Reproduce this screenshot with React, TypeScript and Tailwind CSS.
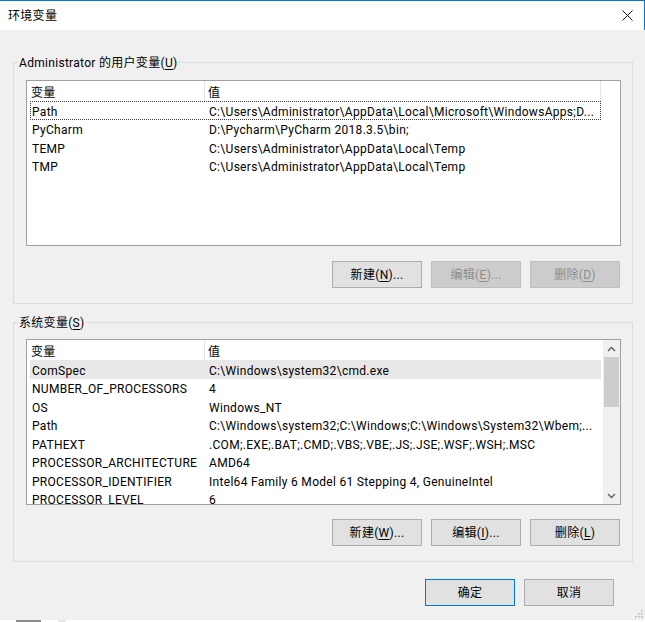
import type React from "react";

const userVars: [string, string][] = [
  ["Path", "C:\\Users\\Administrator\\AppData\\Local\\Microsoft\\WindowsApps;D..."],
  ["PyCharm", "D:\\Pycharm\\PyCharm 2018.3.5\\bin;"],
  ["TEMP", "C:\\Users\\Administrator\\AppData\\Local\\Temp"],
  ["TMP", "C:\\Users\\Administrator\\AppData\\Local\\Temp"],
];

const sysVars: [string, string][] = [
  ["ComSpec", "C:\\Windows\\system32\\cmd.exe"],
  ["NUMBER_OF_PROCESSORS", "4"],
  ["OS", "Windows_NT"],
  ["Path", "C:\\Windows\\system32;C:\\Windows;C:\\Windows\\System32\\Wbem;..."],
  ["PATHEXT", ".COM;.EXE;.BAT;.CMD;.VBS;.VBE;.JS;.JSE;.WSF;.WSH;.MSC"],
  ["PROCESSOR_ARCHITECTURE", "AMD64"],
  ["PROCESSOR_IDENTIFIER", "Intel64 Family 6 Model 61 Stepping 4, GenuineIntel"],
  ["PROCESSOR_LEVEL", "6"],
];

function Key({ children }: { children: React.ReactNode }) {
  return <span className="underline underline-offset-[2px]">{children}</span>;
}

function Btn({
  children,
  disabled,
  primary,
}: {
  children: React.ReactNode;
  disabled?: boolean;
  primary?: boolean;
}) {
  return (
    <button
      type="button"
      className={
        "flex h-[27px] w-[90px] items-center justify-center border pt-[1px] text-[12px] tracking-[0.3px] " +
        (disabled
          ? "border-[#bfbfbf] bg-[#cccccc] text-[#8c8c8c]"
          : primary
            ? "border-[#0078d7] bg-[#e1e1e1] text-black"
            : "border-[#adadad] bg-[#e1e1e1] text-black")
      }
    >
      {children}
    </button>
  );
}

function Chevron({ down }: { down?: boolean }) {
  return (
    <svg width="9" height="6" viewBox="0 0 9 6" className={down ? "rotate-180" : ""}>
      <polyline points="1,5 4.5,1.5 8,5" fill="none" stroke="#606060" strokeWidth="1.4" />
    </svg>
  );
}

function VarList({ rows, focused, selected, scroll }: { rows: [string, string][]; focused?: number; selected?: number; scroll?: boolean }) {
  return (
    <div className="flex h-[166px] overflow-hidden border border-[#a0a0a0] bg-white">
      <div className="flex min-w-0 flex-1 flex-col">
        <div className="flex h-[20px] shrink-0 items-center">
          <div className="flex h-full w-[178px] items-center border-r border-[#e5e5e5] pl-[4px] pt-[3px]">变量</div>
          <div className={"flex h-full w-[396px] items-center pl-[3px] pt-[3px] " + (scroll ? "" : "border-r border-[#e5e5e5]")}>值</div>
        </div>
        {rows.map(([name, value], i) => (
          <div
            key={name + i}
            className={
              "ml-[3px] flex h-[18.5px] w-[571px] shrink-0 items-center whitespace-nowrap pt-[3px] " +
              (i === focused ? "border border-dotted border-[#3c3c3c] " : "") +
              (i === selected ? "bg-[#e8e8e8]" : "")
            }
          >
            <div className={"w-[177px] shrink-0 overflow-hidden " + (i === focused ? "pl-[1px]" : "pl-[2px]")}>{name}</div>
            <div className={"min-w-0 flex-1 overflow-hidden " + (i === focused ? "pl-[1px]" : "pl-[2px]")}>{value}</div>
          </div>
        ))}
      </div>
      {scroll && (
        <div className="flex w-[17px] shrink-0 flex-col bg-[#f0f0f0]">
          <div className="flex h-[17px] items-center justify-center">
            <Chevron />
          </div>
          <div className="mx-[1px] h-[50px] bg-[#cdcdcd]" />
          <div className="mt-auto flex h-[17px] items-center justify-center">
            <Chevron down />
          </div>
        </div>
      )}
    </div>
  );
}

function Group({ title, children }: { title: React.ReactNode; children: React.ReactNode }) {
  return (
    <fieldset className="min-w-0 border border-[#dcdcdc] pb-[15px] pl-[12px] pr-[11px]">
      <legend className="-ml-[8px] px-[1px] pt-[2px] text-[12px] leading-[16px]">{title}</legend>
      {children}
    </fieldset>
  );
}

export default function App() {
  return (
    <div
      className="h-[622px] w-[645px] overflow-hidden bg-white text-[12px] tracking-[0.3px] text-black"
      style={{ fontFamily: 'Roboto, "Noto Sans CJK SC", sans-serif' }}
    >
      {/* Title bar */}
      <div className="flex h-[30px] items-center justify-between border-r border-t border-[#0078d7] bg-white pl-[8px] pr-[11px]">
        <span className="pt-[1px] text-[12px]">环境变量</span>
        <svg width="11" height="11" viewBox="0 0 11 11">
          <path d="M0.5 0.5 L10.5 10.5 M10.5 0.5 L0.5 10.5" stroke="#111" strokeWidth="1" />
        </svg>
      </div>

      {/* Body */}
      <div className="relative flex h-[590px] flex-col bg-[#f0f0f0] pl-[13px] pr-[12px] pt-[23px]">
        <Group
          title={
            <>
              Administrator 的用户变量(<Key>U</Key>)
            </>
          }
        >
          <div className="mt-[9px]">
            <VarList rows={userVars} focused={0} />
          </div>
          <div className="mt-[15px] flex justify-end gap-[9px] pr-[1px]">
            <Btn>
              新建(<Key>N</Key>)...
            </Btn>
            <Btn disabled>
              编辑(<Key>E</Key>)...
            </Btn>
            <Btn disabled>
              删除(<Key>D</Key>)
            </Btn>
          </div>
        </Group>

        <div className="mt-[9px]">
          <Group
            title={
              <>
                系统变量(<Key>S</Key>)
              </>
            }
          >
            <div className="mt-[8px]">
              <VarList rows={sysVars} selected={0} scroll />
            </div>
            <div className="mt-[14px] flex justify-end gap-[9px] pr-[1px]">
              <Btn>
                新建(<Key>W</Key>)...
              </Btn>
              <Btn>
                编辑(<Key>I</Key>)...
              </Btn>
              <Btn>
                删除(<Key>L</Key>)
              </Btn>
            </div>
          </Group>
        </div>

        <div className="mt-[17px] flex justify-end gap-[9px] pr-[19px]">
          <Btn primary>确定</Btn>
          <Btn>取消</Btn>
        </div>

        {/* size grip */}
        <svg width="8" height="8" viewBox="0 0 8 8" className="absolute bottom-[2px] right-[2px]">
          <rect x="6" y="0" width="1.5" height="1.5" fill="#b4b4b4" />
          <rect x="3" y="3" width="1.5" height="1.5" fill="#b4b4b4" />
          <rect x="6" y="3" width="1.5" height="1.5" fill="#b4b4b4" />
          <rect x="0" y="6" width="1.5" height="1.5" fill="#b4b4b4" />
          <rect x="3" y="6" width="1.5" height="1.5" fill="#b4b4b4" />
          <rect x="6" y="6" width="1.5" height="1.5" fill="#b4b4b4" />
        </svg>
      </div>

      {/* strip of whatever lies behind the window */}
      <div className="flex h-[2px] bg-white">
        <div className="ml-[16px] h-[2px] w-[25px] bg-[#8a8a8a]" />
        <div className="ml-[17px] h-[2px] w-[8px] bg-[#e6e6e6]" />
      </div>
    </div>
  );
}
